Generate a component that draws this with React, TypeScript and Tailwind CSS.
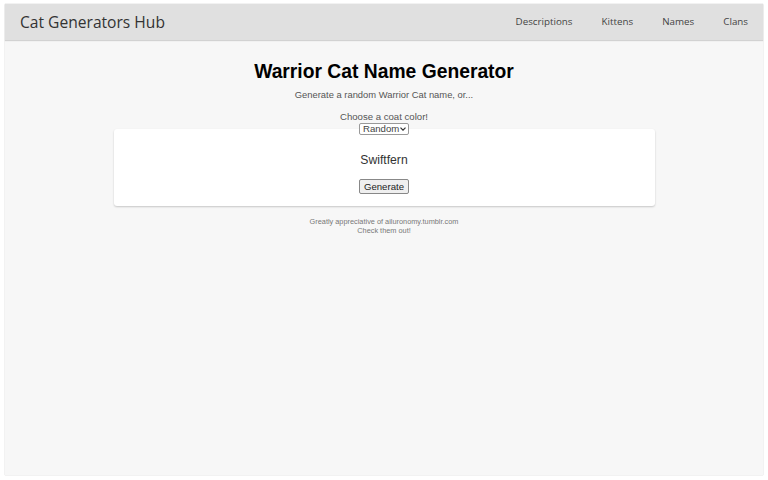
export default function App() {
  return (
    <div className="h-[480px] w-[768px] bg-white pt-1 pr-[5px] pb-[5px] pl-[5px] font-['Liberation_Sans',sans-serif]">
      <div className="flex h-full flex-col bg-[#f7f7f7] shadow-[0_0_1px_rgba(0,0,0,0.3)]">
        <header className="flex h-9 items-center justify-between bg-[#e0e0e0] pt-[1px] pr-[15px] pl-[15px] font-['Open_Sans',sans-serif] shadow-[0_1px_1px_rgba(0,0,0,0.15)]">
          <span className="text-[15.6px] text-[#333]">Cat Generators Hub</span>
          <nav className="flex gap-[29px] text-[9.8px] text-[#444]">
            <a>Descriptions</a>
            <a>Kittens</a>
            <a>Names</a>
            <a>Clans</a>
          </nav>
        </header>
        <main className="flex flex-col items-center text-center">
          <h1 className="mt-[20px] text-[19.3px] leading-[24px] font-bold text-black">Warrior Cat Name Generator</h1>
          <p className="mt-[5px] text-[9.4px] leading-[12px] text-[#555]">Generate a random Warrior Cat name, or...</p>
          <p className="mt-[10px] text-[9.6px] leading-[12px] text-[#555]">Choose a coat color!</p>
          <div className="relative z-10 -mb-[6px] h-[12px] w-[50px]">
            <select className="block h-full w-full appearance-none rounded-[2px] border border-[#999] bg-white pl-[3px] text-[9.6px] leading-[10px] text-[#444]">
              <option>Random</option>
            </select>
            <svg className="pointer-events-none absolute top-[4px] right-[3px] h-[4px] w-[6px]" viewBox="0 0 6 4" fill="none" stroke="#333" strokeWidth="1.2">
              <path d="M0.5 0.7 L3 3.2 L5.5 0.7" />
            </svg>
          </div>
          <div className="flex h-[77px] w-[541px] flex-col items-center rounded-[3px] bg-white shadow-[0_1px_2px_rgba(0,0,0,0.2)]">
            <p className="mt-[24px] text-[12.2px] leading-[15px] text-[#333]">Swiftfern</p>
            <button className="mt-[11px] h-[15px] w-[50px] rounded-[2px] border border-[#888] bg-[#efefef] text-[9.6px] leading-[13px] text-[#222]">Generate</button>
          </div>
          <p className="mt-[11px] text-[7.35px] leading-[9px] text-[#777]">Greatly appreciative of ailuronomy.tumblr.com<br />Check them out!</p>
        </main>
      </div>
    </div>
  );
}
